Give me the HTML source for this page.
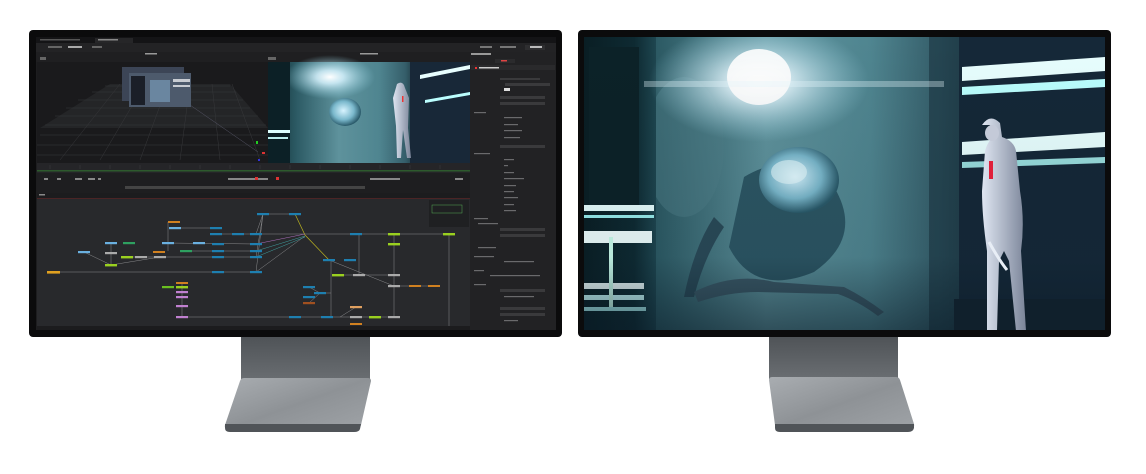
<!DOCTYPE html>
<html><head><meta charset="utf-8"><style>
html,body{margin:0;padding:0;background:#fff;width:1146px;height:474px;overflow:hidden}
svg{display:block}
text{font-family:"Liberation Sans",sans-serif}
</style></head><body>
<svg width="1146" height="474" viewBox="0 0 1146 474" xmlns="http://www.w3.org/2000/svg">
<defs>
<linearGradient id="neck" x1="0" y1="0" x2="0" y2="1"><stop offset="0" stop-color="#4e5256"/><stop offset="1" stop-color="#6a6e72"/></linearGradient>
<linearGradient id="base" x1="0" y1="0" x2="1" y2="1"><stop offset="0" stop-color="#a9adb1"/><stop offset="0.5" stop-color="#8e9296"/><stop offset="1" stop-color="#9fa3a7"/></linearGradient>
<linearGradient id="rbg" x1="0" y1="0" x2="1" y2="0"><stop offset="0" stop-color="#0f2a30"/><stop offset="0.14" stop-color="#2c5a64"/><stop offset="0.35" stop-color="#5e929c"/><stop offset="0.55" stop-color="#4f8590"/><stop offset="0.68" stop-color="#355e6a"/><stop offset="0.74" stop-color="#1a3038"/><stop offset="1" stop-color="#1c2c40"/></linearGradient>
<linearGradient id="vfade" x1="0" y1="0" x2="0" y2="1"><stop offset="0" stop-color="#000" stop-opacity="0"/><stop offset="0.75" stop-color="#0a1a26" stop-opacity="0.1"/><stop offset="1" stop-color="#0a1a26" stop-opacity="0.55"/></linearGradient>
<radialGradient id="glow" cx="0.5" cy="0.5" r="0.5"><stop offset="0" stop-color="#ffffff"/><stop offset="0.25" stop-color="#e8f8ff" stop-opacity="0.9"/><stop offset="1" stop-color="#9fd8e8" stop-opacity="0"/></radialGradient>
<radialGradient id="dome" cx="0.45" cy="0.45" r="0.55"><stop offset="0" stop-color="#d8f4ff"/><stop offset="0.6" stop-color="#7ab8cc"/><stop offset="1" stop-color="#2a5a6a"/></radialGradient>
<linearGradient id="robot" x1="0" y1="0" x2="1" y2="0"><stop offset="0" stop-color="#dfe6f2"/><stop offset="1" stop-color="#7a8498"/></linearGradient>
<radialGradient id="glow2" cx="0.5" cy="0.5" r="0.5"><stop offset="0" stop-color="#ffffff"/><stop offset="0.3" stop-color="#d8f4ff" stop-opacity="0.85"/><stop offset="1" stop-color="#8fd0e0" stop-opacity="0"/></radialGradient>
<linearGradient id="lcol" x1="0" y1="0" x2="1" y2="0"><stop offset="0" stop-color="#0a1e24"/><stop offset="0.7" stop-color="#0e2a32"/><stop offset="1" stop-color="#1e4650"/></linearGradient>
</defs>

<!-- LEFT STAND -->
<rect x="241" y="335" width="129" height="46" fill="url(#neck)"/>
<path d="M244 378 L368 378 Q371 378 371 381 L361 425 Q360 430 355 430 L229 430 Q224 430 225 425 L240 381 Q241 378 244 378Z" fill="url(#base)"/>
<path d="M225 424 L361 424 L360 429 Q359 432 354 432 L230 432 Q225 432 225 428Z" fill="#505458"/>
<!-- RIGHT STAND -->
<rect x="769" y="335" width="129" height="44" fill="url(#neck)"/>
<path d="M772 377 L896 377 Q899 377 900 380 L914 424 Q915 430 909 430 L780 430 Q775 430 775 425 L769 380 Q769 377 772 377Z" fill="url(#base)"/>
<path d="M775 424 L914 424 L914 428 Q913 432 908 432 L780 432 Q775 432 775 428Z" fill="#505458"/>

<!-- LEFT BEZEL -->
<rect x="29" y="30" width="533" height="307" rx="4" fill="#0b0b0c"/>
<rect x="36" y="37" width="520" height="293" fill="#1d1d1f"/>
<rect x="36" y="37" width="520" height="6" fill="#141416"/>
<rect x="95" y="38" width="38" height="5" fill="#262628"/>
<rect x="40" y="39" width="40" height="1.5" fill="#555"/>
<rect x="98" y="39" width="20" height="1.5" fill="#888"/>
<rect x="36" y="43" width="520" height="9" fill="#232325"/>
<rect x="48" y="46" width="14" height="2" fill="#666"/>
<rect x="68" y="46" width="14" height="2" fill="#aaa"/>
<rect x="92" y="46" width="10" height="2" fill="#666"/>
<rect x="480" y="46" width="12" height="2" fill="#777"/>
<rect x="500" y="46" width="16" height="2" fill="#777"/>
<rect x="525" y="45" width="20" height="5" fill="#2e2e30"/>
<rect x="530" y="46" width="12" height="2" fill="#bbb"/>
<rect x="36" y="52" width="434" height="10" fill="#1f1f21"/>
<rect x="145" y="53" width="12" height="1.5" fill="#999"/>
<rect x="360" y="53" width="18" height="1.5" fill="#999"/>
<rect x="40" y="57" width="6" height="3" fill="#666"/>
<rect x="268" y="57" width="8" height="3" fill="#666"/>
<rect x="37" y="62" width="231" height="101" fill="#1a1a1c"/>
<path d="M40 128 L110 84 L230 84 L268 128 Z" fill="#242527"/>
<g stroke="#37383b" stroke-width="0.5">
<line x1="40" y1="135" x2="268" y2="135"/><line x1="45" y1="125" x2="266" y2="125"/><line x1="55" y1="116" x2="258" y2="116"/><line x1="66" y1="108" x2="250" y2="108"/><line x1="78" y1="100" x2="243" y2="100"/><line x1="92" y1="92" x2="236" y2="92"/><line x1="105" y1="86" x2="230" y2="86"/>
<line x1="60" y1="160" x2="120" y2="84"/><line x1="100" y1="160" x2="145" y2="84"/><line x1="140" y1="160" x2="168" y2="84"/><line x1="180" y1="160" x2="190" y2="84"/><line x1="220" y1="160" x2="212" y2="84"/><line x1="260" y1="160" x2="232" y2="84"/><line x1="37" y1="145" x2="268" y2="145"/><line x1="37" y1="155" x2="268" y2="155"/>
</g>
<line x1="190" y1="105" x2="258" y2="152" stroke="#556" stroke-width="0.5"/>
<rect x="122" y="67" width="62" height="34" fill="#3c4556"/>
<rect x="129" y="73" width="62" height="34" fill="#4d5a6c"/>
<rect x="131" y="76" width="14" height="29" fill="#1b1f28"/>
<rect x="150" y="80" width="20" height="22" fill="#6a86a0"/>
<rect x="173" y="79" width="17" height="3" fill="#c8ccd2"/><rect x="173" y="85" width="17" height="2" fill="#c8ccd2"/>
<rect x="256" y="141" width="2" height="3" fill="#2c2"/><rect x="262" y="152" width="3" height="2" fill="#d33"/><rect x="258" y="159" width="2" height="2" fill="#33d"/>
<rect x="268" y="62" width="202" height="101" fill="url(#rbg)"/>
<ellipse cx="330" cy="77" rx="45" ry="22" fill="url(#glow2)"/>
<rect x="268" y="62" width="22" height="101" fill="#0c2026"/>
<rect x="268" y="130" width="22" height="3" fill="#dff" /><rect x="268" y="137" width="20" height="2" fill="#bee"/>
<ellipse cx="345" cy="112" rx="16" ry="14" fill="url(#dome)"/>
<rect x="410" y="62" width="60" height="101" fill="#182838"/>
<path d="M420 75 L470 65 L470 69 L420 79Z" fill="#e8ffff"/><path d="M425 100 L470 92 L470 95 L425 103Z" fill="#bff"/>
<path d="M397 84 q6 -4 8 4 l4 10 l-1 30 l3 30 l-4 0 l-4 -28 l-2 28 l-4 0 l-1 -32 l-3 -28z" fill="url(#robot)"/>
<rect x="402" y="96" width="1.5" height="6" fill="#e33"/>
<rect x="470" y="52" width="86" height="278" fill="#222224"/>
<rect x="471" y="53" width="20" height="2" fill="#999"/>
<rect x="495" y="59" width="20" height="4" fill="#2b2b2d"/><rect x="501" y="60" width="6" height="1.5" fill="#d44"/>
<rect x="471" y="65" width="84" height="5" fill="#2a2a2c"/><rect x="475" y="67" width="2" height="2" fill="#e33"/><rect x="479" y="67" width="20" height="1.5" fill="#ccc"/>
<g fill="#3a3a3c">
<rect x="500" y="78" width="40" height="2"/><rect x="505" y="83" width="45" height="3"/><rect x="500" y="96" width="45" height="3"/><rect x="500" y="102" width="45" height="3"/><rect x="500" y="145" width="45" height="3"/>
<rect x="500" y="228" width="45" height="3"/><rect x="500" y="234" width="45" height="3"/><rect x="500" y="289" width="45" height="3"/><rect x="500" y="307" width="45" height="3"/><rect x="500" y="313" width="45" height="3"/>
</g>
<g fill="#6a6a6c">
<rect x="474" y="112" width="12" height="1.2"/><rect x="504" y="117" width="18" height="1.2"/><rect x="504" y="124" width="14" height="1.2"/><rect x="504" y="130" width="18" height="1.2"/><rect x="504" y="137" width="16" height="1.2"/>
<rect x="474" y="153" width="16" height="1.2"/><rect x="504" y="159" width="10" height="1.2"/><rect x="504" y="165" width="4" height="1.2"/><rect x="504" y="172" width="10" height="1.2"/><rect x="504" y="178" width="20" height="1.2"/><rect x="504" y="185" width="12" height="1.2"/><rect x="504" y="191" width="10" height="1.2"/><rect x="504" y="197" width="14" height="1.2"/><rect x="504" y="204" width="10" height="1.2"/><rect x="504" y="210" width="12" height="1.2"/>
<rect x="474" y="218" width="14" height="1.2"/><rect x="478" y="223" width="20" height="1.2"/><rect x="478" y="247" width="18" height="1.2"/><rect x="474" y="256" width="20" height="1.2"/><rect x="504" y="261" width="30" height="1.2"/><rect x="474" y="270" width="10" height="1.2"/><rect x="490" y="275" width="50" height="1.2"/><rect x="474" y="284" width="12" height="1.2"/><rect x="504" y="296" width="30" height="1.2"/><rect x="504" y="320" width="14" height="1.2"/>
</g>
<rect x="504" y="88" width="6" height="3" fill="#ddd"/>
<rect x="37" y="163" width="433" height="10" fill="#252528"/>
<rect x="37" y="170" width="433" height="1.5" fill="#2d5a2d"/>
<g stroke="#444" stroke-width="0.4"><line x1="50" y1="165" x2="50" y2="169"/><line x1="80" y1="165" x2="80" y2="169"/><line x1="110" y1="165" x2="110" y2="169"/><line x1="140" y1="165" x2="140" y2="169"/><line x1="170" y1="165" x2="170" y2="169"/><line x1="200" y1="165" x2="200" y2="169"/><line x1="230" y1="165" x2="230" y2="169"/><line x1="260" y1="165" x2="260" y2="169"/><line x1="290" y1="165" x2="290" y2="169"/><line x1="320" y1="165" x2="320" y2="169"/><line x1="350" y1="165" x2="350" y2="169"/><line x1="380" y1="165" x2="380" y2="169"/><line x1="410" y1="165" x2="410" y2="169"/><line x1="440" y1="165" x2="440" y2="169"/></g>
<rect x="37" y="173" width="433" height="20" fill="#1e1e20"/>
<g fill="#888"><rect x="44" y="178" width="4" height="2"/><rect x="57" y="178" width="4" height="2"/><rect x="75" y="178" width="7" height="2"/><rect x="88" y="178" width="7" height="2"/><rect x="98" y="178" width="3" height="2"/>
<rect x="228" y="178" width="40" height="2"/><rect x="370" y="178" width="30" height="2"/><rect x="455" y="178" width="8" height="2"/></g>
<rect x="255" y="177" width="3" height="3" fill="#d33"/><rect x="276" y="177" width="3" height="3" fill="#d33"/>
<g fill="#444"><rect x="125" y="186" width="240" height="3"/></g>
<rect x="37" y="193" width="433" height="5" fill="#1c1c1e"/>
<rect x="39" y="194" width="6" height="1.5" fill="#888"/>
<rect x="37" y="198" width="433" height="0.6" fill="#6a2a2a"/>
<rect x="37" y="199" width="433" height="127" fill="#28292c"/>
<rect x="37" y="326" width="433" height="4" fill="#1c1c1e"/>
<rect x="429" y="200" width="40" height="27" fill="#1f2022"/>
<rect x="432" y="205" width="30" height="8" fill="none" stroke="#5a5" stroke-width="0.5"/>
<g stroke="#8a8a8c" stroke-width="0.5" fill="none">
<line x1="54" y1="272" x2="256" y2="272"/><line x1="216" y1="234" x2="449" y2="234"/><line x1="182" y1="317" x2="394" y2="317"/>
<line x1="394" y1="234" x2="394" y2="317"/><line x1="449" y1="234" x2="449" y2="326"/><line x1="331" y1="260" x2="331" y2="317"/><line x1="359" y1="234" x2="359" y2="275"/>
<line x1="84" y1="252" x2="111" y2="265"/><line x1="111" y1="265" x2="160" y2="257"/><line x1="127" y1="257" x2="256" y2="257"/><line x1="168" y1="243" x2="256" y2="244"/><line x1="175" y1="228" x2="216" y2="228"/><line x1="186" y1="251" x2="256" y2="251"/>
<line x1="263" y1="214" x2="256" y2="272"/><line x1="263" y1="214" x2="256" y2="234"/><line x1="263" y1="214" x2="256" y2="257"/><line x1="263" y1="214" x2="295" y2="214"/>
<line x1="256" y1="272" x2="305" y2="236"/><line x1="329" y1="260" x2="394" y2="286"/><line x1="394" y1="286" x2="434" y2="286"/><line x1="338" y1="275" x2="394" y2="275"/>
<line x1="182" y1="283" x2="182" y2="317"/><line x1="309" y1="287" x2="320" y2="293"/><line x1="309" y1="303" x2="320" y2="293"/><line x1="320" y1="293" x2="331" y2="293"/>
<line x1="356" y1="307" x2="340" y2="317"/><line x1="111" y1="243" x2="111" y2="265"/><line x1="168" y1="222" x2="168" y2="251"/>
</g>
<polyline points="295,214 305,235 329,260" stroke="#b8b020" stroke-width="0.7" fill="none"/>
<g stroke="#b070c0" stroke-width="0.5"><line x1="256" y1="244" x2="305" y2="234"/></g>
<g stroke="#40a0a0" stroke-width="0.5"><line x1="256" y1="251" x2="305" y2="236"/><line x1="256" y1="257" x2="305" y2="237"/></g>
<g>
<rect x="289" y="213" width="12" height="2.2" fill="#1e7fb0"/><rect x="257" y="213" width="12" height="2.2" fill="#1e7fb0"/>
<rect x="210" y="227" width="12" height="2.2" fill="#1e7fb0"/><rect x="169" y="227" width="12" height="2.2" fill="#6ab0e0"/>
<rect x="210" y="233" width="12" height="2.2" fill="#1e7fb0"/><rect x="232" y="233" width="12" height="2.2" fill="#1e7fb0"/><rect x="250" y="233" width="12" height="2.2" fill="#1e7fb0"/><rect x="350" y="233" width="12" height="2.2" fill="#1e7fb0"/>
<rect x="388" y="233" width="12" height="2.4" fill="#9ad020"/><rect x="443" y="233" width="12" height="2.4" fill="#9ad020"/>
<rect x="105" y="242" width="12" height="2.2" fill="#6ab0e0"/><rect x="123" y="242" width="12" height="2.2" fill="#2ea060"/><rect x="162" y="242" width="12" height="2.2" fill="#6ab0e0"/><rect x="193" y="242" width="12" height="2.2" fill="#6ab0e0"/><rect x="212" y="243" width="12" height="2.2" fill="#1e7fb0"/><rect x="250" y="243" width="12" height="2.2" fill="#1e7fb0"/><rect x="388" y="243" width="12" height="2.4" fill="#9ad020"/>
<rect x="78" y="251" width="12" height="2.2" fill="#6ab0e0"/><rect x="105" y="252" width="12" height="2.2" fill="#aaa"/><rect x="180" y="250" width="12" height="2.2" fill="#2ea060"/><rect x="212" y="250" width="12" height="2.2" fill="#1e7fb0"/><rect x="250" y="250" width="12" height="2.2" fill="#1e7fb0"/><rect x="153" y="251" width="12" height="2" fill="#d08020"/>
<rect x="121" y="256" width="12" height="2.4" fill="#9ad020"/><rect x="135" y="256" width="12" height="2.2" fill="#aaa"/><rect x="154" y="256" width="12" height="2.2" fill="#aaa"/><rect x="212" y="256" width="12" height="2.2" fill="#1e7fb0"/><rect x="250" y="256" width="12" height="2.2" fill="#1e7fb0"/>
<rect x="105" y="264" width="12" height="2.4" fill="#9ad020"/>
<rect x="47" y="271" width="13" height="2.6" fill="#e0a020"/><rect x="212" y="271" width="12" height="2.2" fill="#1e7fb0"/><rect x="250" y="271" width="12" height="2.2" fill="#1e7fb0"/>
<rect x="323" y="259" width="12" height="2.2" fill="#1e7fb0"/><rect x="344" y="259" width="12" height="2.2" fill="#1e7fb0"/>
<rect x="332" y="274" width="12" height="2.4" fill="#9ad020"/><rect x="353" y="274" width="12" height="2.2" fill="#aaa"/><rect x="388" y="274" width="12" height="2.2" fill="#aaa"/>
<rect x="388" y="285" width="12" height="2.2" fill="#aaa"/><rect x="409" y="285" width="12" height="2" fill="#d08020"/><rect x="428" y="285" width="12" height="2" fill="#d08020"/>
<rect x="162" y="286" width="12" height="2.2" fill="#6ac020"/><rect x="176" y="286" width="12" height="2.4" fill="#9ad020"/>
<rect x="176" y="291" width="12" height="2.2" fill="#c080d0"/><rect x="176" y="296" width="12" height="2.2" fill="#c080d0"/><rect x="176" y="305" width="12" height="2.2" fill="#c080d0"/><rect x="176" y="316" width="12" height="2.2" fill="#c080d0"/><rect x="176" y="282" width="12" height="2" fill="#d08020"/>
<rect x="303" y="286" width="12" height="2.2" fill="#1e7fb0"/><rect x="314" y="292" width="12" height="2.2" fill="#1e7fb0"/><rect x="303" y="296" width="12" height="2.2" fill="#1e7fb0"/><rect x="303" y="302" width="12" height="2.2" fill="#a05020"/>
<rect x="289" y="316" width="12" height="2.2" fill="#1e7fb0"/><rect x="321" y="316" width="12" height="2.2" fill="#1e7fb0"/><rect x="350" y="306" width="12" height="2.2" fill="#e0a060"/><rect x="350" y="316" width="12" height="2.2" fill="#aaa"/><rect x="369" y="316" width="12" height="2.4" fill="#9ad020"/><rect x="388" y="316" width="12" height="2.2" fill="#aaa"/><rect x="350" y="323" width="12" height="2" fill="#d08020"/>
<rect x="168" y="221" width="12" height="2" fill="#d08020"/>
</g>

<!-- RIGHT BEZEL -->
<rect x="578" y="30" width="533" height="307" rx="4" fill="#0b0b0c"/>
<svg x="584" y="37" width="521" height="293" viewBox="0 0 521 293">
<rect width="521" height="293" fill="url(#rbg)"/>
<ellipse cx="100" cy="110" rx="40" ry="70" fill="#4e7d88" opacity="0.5"/>
<rect x="0" y="0" width="72" height="293" fill="url(#lcol)"/>
<rect x="5" y="10" width="50" height="160" fill="#0c2228"/>
<rect x="0" y="168" width="70" height="6" fill="#e8ffff"/><rect x="0" y="178" width="70" height="3" fill="#9ee"/><rect x="0" y="194" width="68" height="12" fill="#f0ffff"/>
<rect x="0" y="246" width="60" height="6" fill="#f0ffff"/><rect x="0" y="258" width="60" height="5" fill="#cff"/><rect x="0" y="270" width="62" height="4" fill="#aee"/>
<rect x="25" y="200" width="4" height="70" fill="#cfe"/>
<rect x="375" y="0" width="146" height="293" fill="#152838"/>
<rect x="345" y="0" width="30" height="293" fill="#22404c" opacity="0.8"/>
<path d="M378 30 L521 20 L521 34 L378 44Z" fill="#e8ffff"/><path d="M378 50 L521 42 L521 50 L378 58Z" fill="#bff"/>
<path d="M378 105 L521 95 L521 110 L378 118Z" fill="#e8ffff"/><path d="M378 125 L521 120 L521 126 L378 131Z" fill="#9dd"/>
<ellipse cx="175" cy="45" rx="110" ry="60" fill="url(#glow)"/>
<ellipse cx="175" cy="40" rx="32" ry="28" fill="#fff" opacity="0.9"/>
<rect x="60" y="44" width="300" height="6" fill="#e8faff" opacity="0.35"/>
<path d="M130 180 q-20 30 -30 80 l10 0 q10 -40 30 -70z" fill="#2a4a58"/>
<path d="M160 140 q50 -30 90 10 q30 50 -20 85 q-60 25 -85 -25z" fill="#2c5664"/>
<ellipse cx="215" cy="143" rx="40" ry="33" fill="url(#dome)"/>
<ellipse cx="205" cy="135" rx="18" ry="12" fill="#e8fbff" opacity="0.6"/>
<path d="M110 255 q40 -20 80 -10 l70 5 q20 10 40 25 l-6 4 q-20 -15 -40 -22 l-80 -2 q-30 0 -60 10z" fill="#3c5a68"/>
<rect width="521" height="293" fill="url(#vfade)"/>
<rect x="370" y="262" width="151" height="31" fill="#10202c"/>
<path d="M398 88 q8 -12 18 -2 l2 14 q12 4 14 14 l4 40 q5 30 1 60 l5 80 l-10 0 l-7 -70 l-5 -10 l-5 10 l-2 70 l-10 0 l0 -80 q-5 -35 -5 -60 l3 -40 q4 -14 12 -14 l-7 -12z" fill="url(#robot)"/>
<ellipse cx="408" cy="96" rx="7" ry="8" fill="#c4cad8"/>
<rect x="405" y="124" width="4" height="18" fill="#e0203a"/>
<path d="M405 205 q10 18 18 28" stroke="#e8eef6" stroke-width="3" fill="none"/>
</svg>
</svg>
</body></html>
